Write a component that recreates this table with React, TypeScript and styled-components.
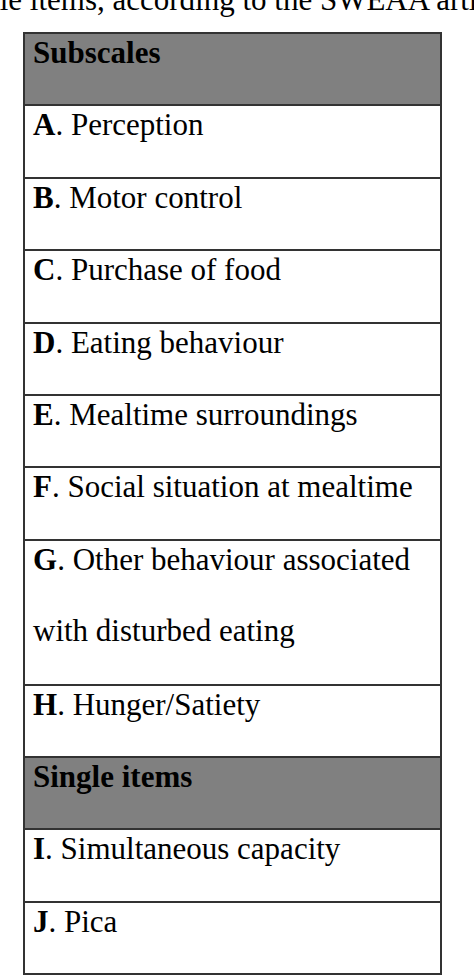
import React from "react";
import styled, { createGlobalStyle } from "styled-components";

const GlobalStyle = createGlobalStyle`
  html, body {
    margin: 0;
    padding: 0;
    background: #ffffff;
  }
  body {
    font-family: "Liberation Serif", "Times New Roman", serif;
    color: #000000;
  }
`;

// Layout
const Page = styled.div`
  width: 474px;
  height: 975px;
  overflow: hidden;
  background: #ffffff;
`;

// The cut-off sentence above the table
const CaptionClip = styled.div`
  height: 32px;
  overflow: hidden;
`;

const Caption = styled.div`
  font-size: 31px;
  line-height: 31px;
  white-space: nowrap;
  margin-top: -16px;
  margin-left: -52px;
`;

const Table = styled.div`
  width: 419px;
  margin-left: 23px;
  border: 2px solid #333333;
  border-bottom: none;
  box-sizing: border-box;
  display: flex;
  flex-direction: column;
`;

const Row = styled.div<{ $heading?: boolean; $lines: number }>`
  height: ${(p) => p.$lines * 72.4 - 2}px;
  border-bottom: 2px solid #333333;
  background: ${(p) => (p.$heading ? "#808080" : "#ffffff")};
  padding: 0 8px;
  overflow: hidden;
`;

const CellText = styled.div<{ $heading?: boolean }>`
  font-size: 31px;
  line-height: 71px;
  margin-top: -17px;
  font-weight: ${(p) => (p.$heading ? 700 : 400)};
`;

const Letter = styled.b`
  font-weight: 700;
`;

interface Item {
  letter: string;
  label: string;
  lines?: number;
}

const subscales: Array<Item> = [
  { letter: "A", label: "Perception" },
  { letter: "B", label: "Motor control" },
  { letter: "C", label: "Purchase of food" },
  { letter: "D", label: "Eating behaviour" },
  { letter: "E", label: "Mealtime surroundings" },
  { letter: "F", label: "Social situation at mealtime" },
  { letter: "G", label: "Other behaviour associated with disturbed eating", lines: 2 },
  { letter: "H", label: "Hunger/Satiety" },
];

const singleItems: Array<Item> = [
  { letter: "I", label: "Simultaneous capacity" },
  { letter: "J", label: "Pica" },
];

const ItemRow = ({ item }: { item: Item }) => (
  <Row $lines={item.lines || 1}>
    <CellText>
      <Letter>{item.letter}</Letter>. {item.label}
    </CellText>
  </Row>
);

export default function App() {
  return (
    <Page>
      <GlobalStyle />
      <CaptionClip>
        <Caption>single items, according to the SWEAA article</Caption>
      </CaptionClip>
      <Table>
        <Row $heading $lines={1}>
          <CellText $heading>Subscales</CellText>
        </Row>
        {subscales.map((item) => (
          <ItemRow key={item.letter} item={item} />
        ))}
        <Row $heading $lines={1}>
          <CellText $heading>Single items</CellText>
        </Row>
        {singleItems.map((item) => (
          <ItemRow key={item.letter} item={item} />
        ))}
      </Table>
    </Page>
  );
}
